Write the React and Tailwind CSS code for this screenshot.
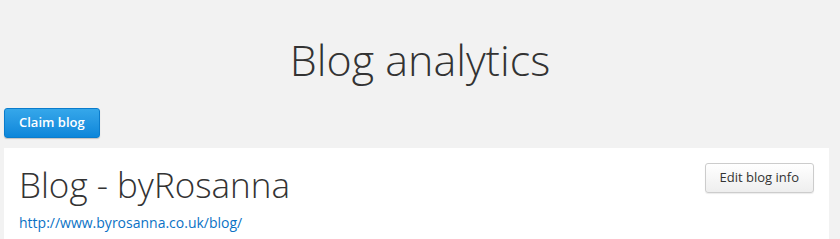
export default function App() {
  return (
    <div className="min-h-screen bg-[#f2f2f2] font-['Open_Sans',sans-serif] text-[#333]">
      <header className="pt-[30px] pb-[18px] text-center">
        <h1 className="text-[43px] font-light leading-[60px] text-[#333]">Blog analytics</h1>
      </header>

      <div className="px-1">
        <button className="h-[30px] rounded-[3px] border border-[#0a7ccc] bg-gradient-to-b from-[#35a7ea] to-[#0a86da] px-[14px] text-[13px] font-semibold text-white shadow-[0_1px_1px_rgba(0,0,0,0.2)]">
          Claim blog
        </button>
      </div>

      <section className="mt-[10px] mr-[11px] ml-1 bg-white px-[15px] pt-[15px] pb-4">
        <div className="flex items-start justify-between">
          <div>
            <h2 className="text-[35px] font-light leading-[44px] text-[#333]">Blog - byRosanna</h2>
            <a href="#" className="mt-[6px] block text-[14px] leading-5 text-[#0a72c5]">
              http://www.byrosanna.co.uk/blog/
            </a>
          </div>
          <button className="h-[30px] rounded-[3px] border border-[#ccc] bg-gradient-to-b from-white to-[#eee] px-[14px] text-[13px] text-[#333] shadow-[0_1px_1px_rgba(0,0,0,0.08)]">
            Edit blog info
          </button>
        </div>
      </section>
    </div>
  );
}
